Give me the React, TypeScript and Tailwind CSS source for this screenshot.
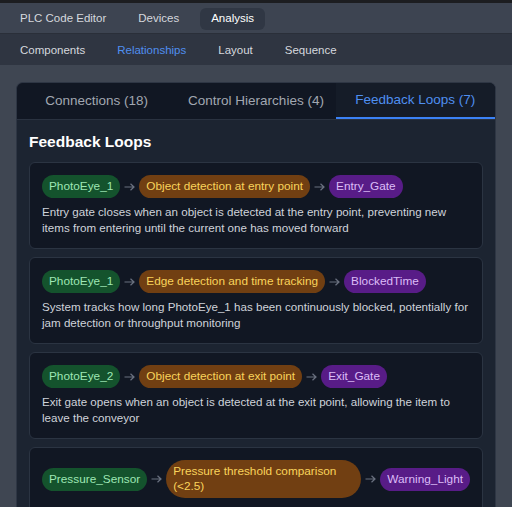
import { Fragment } from 'react'

type Loop = {
  source: string
  logic: string
  target: string
  text: string
}

const loops: Loop[] = [
  {
    source: 'PhotoEye_1',
    logic: 'Object detection at entry point',
    target: 'Entry_Gate',
    text: 'Entry gate closes when an object is detected at the entry point, preventing new items from entering until the current one has moved forward',
  },
  {
    source: 'PhotoEye_1',
    logic: 'Edge detection and time tracking',
    target: 'BlockedTime',
    text: 'System tracks how long PhotoEye_1 has been continuously blocked, potentially for jam detection or throughput monitoring',
  },
  {
    source: 'PhotoEye_2',
    logic: 'Object detection at exit point',
    target: 'Exit_Gate',
    text: 'Exit gate opens when an object is detected at the exit point, allowing the item to leave the conveyor',
  },
  {
    source: 'Pressure_Sensor',
    logic: 'Pressure threshold comparison (<2.5)',
    target: 'Warning_Light',
    text: 'Warning light turns on when the pressure drops below the threshold value',
  },
]

function Arrow() {
  return (
    <svg width="11" height="8" viewBox="0 0 11 8" className="shrink-0" fill="none" stroke="#6b7280" strokeWidth="1.2">
      <path d="M0.5 4h9.5M6.5 0.8L10 4L6.5 7.2" />
    </svg>
  )
}

export default function App() {
  const topTabs = ['PLC Code Editor', 'Devices', 'Analysis']
  const subTabs = ['Components', 'Relationships', 'Layout', 'Sequence']
  const panelTabs = ['Connections (18)', 'Control Hierarchies (4)', 'Feedback Loops (7)']

  return (
    <div className="w-[512px] h-[507px] overflow-hidden bg-[#3f4652] font-['Liberation_Sans',Arial,sans-serif] flex flex-col">
      <div className="h-[3px] bg-[#1c1d20] shrink-0" />

      {/* main nav */}
      <div className="h-[31px] shrink-0 flex items-center gap-[10px] pl-[9px] pt-[2px] bg-[#3d4451] border-b border-[#2a2f39]">
        {topTabs.map((t) => (
          <div
            key={t}
            className={`px-[11px] h-[22px] flex items-center rounded-[6px] text-[11.5px] ${
              t === 'Analysis' ? 'bg-[#303744] text-white' : 'text-[#d5d8de]'
            }`}
          >
            {t}
          </div>
        ))}
      </div>

      {/* sub nav */}
      <div className="h-[31px] shrink-0 flex items-center gap-[32px] pl-5 pt-[3px] bg-[#2f3541]">
        {subTabs.map((t) => (
          <span
            key={t}
            className={`text-[11.5px] ${t === 'Relationships' ? 'text-[#4f8ff0]' : 'text-[#d5d8de]'}`}
          >
            {t}
          </span>
        ))}
      </div>

      {/* content */}
      <div className="flex-1 px-4 pt-[17px] min-h-0">
        <div className="h-full rounded-t-[7px] bg-[#1c2431] border border-[#2e3644] border-b-0 overflow-hidden flex flex-col">
          <div className="h-[37px] shrink-0 grid grid-cols-3 bg-[#111723] border-b border-[#2a3240]">
            {panelTabs.map((t, i) => (
              <div
                key={t}
                className={`flex items-center justify-center text-[13.5px] ${
                  i === 2
                    ? 'bg-[#151c28] text-[#4f8ff0] border-b-2 border-[#3b82f6]'
                    : 'text-[#a1a7b1]'
                }`}
              >
                {t}
              </div>
            ))}
          </div>

          <div className="px-3 pt-[10px]">
            <h2 className="text-[15.5px] leading-6 font-bold text-white mb-[8px]">Feedback Loops</h2>
            <div className="flex flex-col gap-2">
              {loops.map((loop, i) => (
                <div key={i} className="rounded-[6px] bg-[#111723] border border-[#2b3442] p-3">
                  <div className="flex items-center gap-[4px]">
                    {[loop.source, loop.logic, loop.target].map((label, j) => (
                      <Fragment key={j}>
                        {j > 0 && <Arrow />}
                        <span
                          className={`px-[7px] py-1 text-[11.8px] leading-[15px] ${
                            j === 0
                              ? 'bg-[#14532d] text-[#9ee7b4] shrink-0 rounded-full'
                              : j === 1
                              ? 'bg-[#713f12] text-[#f9d35b] rounded-[20px]'
                              : 'bg-[#581c87] text-[#dcbcf7] shrink-0 rounded-full'
                          }`}
                        >
                          {label}
                        </span>
                      </Fragment>
                    ))}
                  </div>
                  <p className="mt-[6px] text-[11.6px] leading-4 text-[#cfd3da]">{loop.text}</p>
                </div>
              ))}
            </div>
          </div>
        </div>
      </div>
    </div>
  )
}
